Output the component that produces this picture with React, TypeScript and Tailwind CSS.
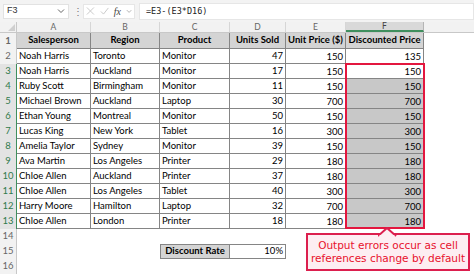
import React from "react";

const rows: [string, string, string, number, number, number][] = [
  ["Noah Harris", "Toronto", "Monitor", 47, 150, 135],
  ["Noah Harris", "Auckland", "Monitor", 17, 150, 150],
  ["Ruby Scott", "Birmingham", "Monitor", 11, 150, 150],
  ["Michael Brown", "Auckland", "Laptop", 30, 700, 700],
  ["Ethan Young", "Montreal", "Monitor", 50, 150, 150],
  ["Lucas King", "New York", "Tablet", 16, 300, 300],
  ["Amelia Taylor", "Sydney", "Monitor", 39, 150, 150],
  ["Ava Martin", "Los Angeles", "Printer", 29, 180, 180],
  ["Chloe Allen", "Auckland", "Printer", 37, 180, 180],
  ["Chloe Allen", "Los Angeles", "Tablet", 40, 300, 300],
  ["Harry Moore", "Hamilton", "Laptop", 32, 700, 700],
  ["Chloe Allen", "London", "Printer", 18, 180, 180],
];

const cellFont = { fontFamily: "Lato, 'Liberation Sans', sans-serif" };

function RowHead({ n, sel }: { n: number; sel?: boolean }) {
  return (
    <div
      className={
        "w-[17px] shrink-0 flex items-center justify-center text-[9.5px] " +
        (sel
          ? "bg-[#e3e3e3] text-[#2f7a4c] border-r border-[#3f8f5e]"
          : "bg-[#f2f2f2] text-[#666] border-r border-[#c8c8c8]")
      }
    >
      {n}
    </div>
  );
}

export default function App() {
  return (
    <div
      className="w-[474px] h-[274px] bg-white overflow-hidden relative text-black"
      style={cellFont}
    >
      {/* Formula bar */}
      <div className="h-[22px] bg-[#f3f3f3] flex items-center pl-[3px] gap-[4px]">
        <div className="w-[66px] h-[15px] bg-white border border-[#e2e2e2] flex items-center justify-between px-[3px] text-[9px] text-[#333]">
          <span style={{ fontFamily: "'Liberation Sans', sans-serif" }}>F3</span>
          <svg width="8" height="6" viewBox="0 0 8 6">
            <path d="M1 1.5 L4 4.5 L7 1.5" stroke="#666" strokeWidth="1" fill="none" />
          </svg>
        </div>
        <div className="text-[#777] text-[10px] leading-none w-[6px] text-center">⋮</div>
        <div className="w-[52px] h-[15px] bg-white border border-[#e6e6e6] flex items-center gap-[5px] px-[2px]">
          <svg width="10" height="10" viewBox="0 0 10 10">
            <path d="M1 1 L9 9 M9 1 L1 9" stroke="#c4c4c4" strokeWidth="1" />
          </svg>
          <svg width="10" height="10" viewBox="0 0 10 10">
            <path d="M1 5.5 L4 8.5 L9.5 1.5" stroke="#c4c4c4" strokeWidth="1" fill="none" />
          </svg>
          <span
            className="text-[10px] italic text-[#444]"
            style={{ fontFamily: "'Liberation Serif', serif" }}
          >
            fx
          </span>
          <svg width="7" height="5" viewBox="0 0 7 5">
            <path d="M1 1 L3.5 3.5 L6 1" stroke="#aaa" strokeWidth="1" fill="none" />
          </svg>
        </div>
        <div className="flex-1 h-[17px] bg-white border border-[#e6e6e6] flex items-center pl-[6px]">
          <span
            className="text-[8.5px] text-[#222]"
            style={{ fontFamily: "'DejaVu Sans Mono', monospace" }}
          >
            =E3-(E3*D16)
          </span>
        </div>
      </div>

      {/* Column header */}
      <div className="h-[11px] flex bg-[#f2f2f2] text-[8.5px] text-[#666] border-b border-[#c8c8c8]">
        <div className="w-[17px] shrink-0 border-r border-[#c8c8c8] flex items-end justify-end pr-[1px] pb-[1px]">
          <svg width="7" height="7" viewBox="0 0 7 7">
            <path d="M7 0 L7 7 L0 7 Z" fill="#cfcfcf" />
          </svg>
        </div>
        {[
          ["A", 74],
          ["B", 69],
          ["C", 70],
          ["D", 56],
          ["E", 60],
        ].map(([l, w]) => (
          <div
            key={l as string}
            className="shrink-0 border-r border-[#d6d6d6] flex items-center justify-center"
            style={{ width: w as number }}
          >
            {l}
          </div>
        ))}
        <div className="w-[78px] shrink-0 bg-[#d9d9d9] border-r border-[#b5b5b5] border-b-2 border-b-[#3f8f5e] flex items-center justify-center text-[#444]">
          F
        </div>
        <div className="flex-1" />
      </div>

      {/* Header row 1 */}
      <div className="h-[16px] flex text-[9.5px] font-bold">
        <RowHead n={1} />
        {[
          ["Salesperson", 74],
          ["Region", 69],
          ["Product", 70],
          ["Units Sold", 56],
          ["Unit Price ($)", 60],
          ["Discounted Price", 78],
        ].map(([t, w]) => (
          <div
            key={t as string}
            className="shrink-0 bg-[#d4d4d4] border-r border-b border-[#858585] flex items-center justify-center whitespace-nowrap overflow-hidden"
            style={{ width: w as number }}
          >
            {t}
          </div>
        ))}
      </div>

      {/* Data rows */}
      {rows.map((r, i) => {
        const n = i + 2;
        const sel = n >= 3;
        const grayF = n >= 4;
        return (
          <div key={n} className="h-[15px] flex text-[9.5px]">
            <RowHead n={n} sel={sel} />
            <div className="w-[74px] shrink-0 border-r border-b border-[#858585] pl-[2px] flex items-center whitespace-nowrap">
              {r[0]}
            </div>
            <div className="w-[69px] shrink-0 border-r border-b border-[#858585] pl-[2px] flex items-center whitespace-nowrap">
              {r[1]}
            </div>
            <div className="w-[70px] shrink-0 border-r border-b border-[#858585] pl-[2px] flex items-center whitespace-nowrap">
              {r[2]}
            </div>
            <div className="w-[56px] shrink-0 border-r border-b border-[#858585] pr-[2px] flex items-center justify-end">
              {r[3]}
            </div>
            <div className="w-[60px] shrink-0 border-r border-b border-[#858585] pr-[2px] flex items-end justify-end leading-[12px]">
              {r[4]}
            </div>
            <div
              className={
                "w-[78px] shrink-0 border-r border-b border-[#858585] pr-[2px] flex items-end justify-end leading-[12px] " +
                (grayF ? "bg-[#c8c8c8]" : "bg-white")
              }
            >
              {r[5]}
            </div>
          </div>
        );
      })}

      {/* Rows 14-16 */}
      <div className="h-[15px] flex text-[9.5px]">
        <RowHead n={14} />
      </div>
      <div className="h-[15px] flex text-[9.5px]">
        <RowHead n={15} />
        <div className="w-[74px] shrink-0" />
        <div className="w-[69px] shrink-0" />
        <div className="w-[70px] shrink-0 bg-[#d4d4d4] border border-[#858585] font-bold flex items-center justify-center whitespace-nowrap">
          Discount Rate
        </div>
        <div className="w-[56px] shrink-0 border-y border-r border-[#858585] pr-[2px] flex items-center justify-end">
          10%
        </div>
      </div>
      <div className="h-[15px] flex text-[9.5px]">
        <RowHead n={16} />
      </div>

      {/* Red highlight box */}
      <div className="absolute left-[345px] top-[63px] w-[80px] h-[166px] border-2 border-[#e3173f]" />

      {/* Callout */}
      <div className="absolute left-[306px] top-[233px] w-[164px] h-[38px] bg-[#fdeef2] border-2 border-[#dc1f4e] flex flex-col items-center justify-center">
        <div
          className="text-[10.5px] leading-[13px] text-[#e8112d] text-center whitespace-nowrap"
          style={{ fontFamily: "'DejaVu Sans', sans-serif" }}
        >
          <div>Output errors occur as cell</div>
          <div>references change by default</div>
        </div>
      </div>
      <svg
        className="absolute left-[378px] top-[227px]"
        width="20"
        height="10"
        viewBox="0 0 20 10"
      >
        <path d="M0 9 L9 1 L18 9" fill="#fdeef2" stroke="#dc1f4e" strokeWidth="2" />
        <rect x="1.5" y="8" width="15" height="3" fill="#fdeef2" />
      </svg>
    </div>
  );
}
